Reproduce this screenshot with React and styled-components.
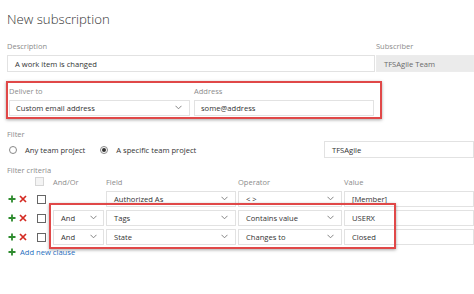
import React from 'react';
import styled, { createGlobalStyle } from 'styled-components';

const GlobalStyle = createGlobalStyle`
  html, body {
    margin: 0;
    padding: 0;
    background: #ffffff;
  }
  body {
    width: 474px;
    height: 294px;
    overflow: hidden;
    font-family: "Open Sans", "Noto Sans", Arial, sans-serif;
    color: #333333;
  }
`

const Page = styled.div`
  padding: 9px 0 0 7px;
  box-sizing: border-box;
  width: 474px;
`

const Title = styled.h1`
  margin: 0 0 12px 0;
  font-weight: 300;
  font-size: 13.2px;
  line-height: 20px;
  color: #333;
`

const Label = styled.div`
  font-size: 7.5px;
  line-height: 10px;
  color: #8c8c8c;
  margin-bottom: ${p => p.gap || 4}px;
`

const TopRow = styled.div`
  display: flex;
  align-items: flex-end;
`

const Field = styled.div`
  display: flex;
  flex-direction: column;
  width: ${p => p.width ? p.width + 'px' : 'auto'};
  flex: ${p => p.width ? 'none' : 1};
  margin-right: ${p => p.right || 0}px;
`

const Box = styled.div`
  height: ${p => p.h || 17}px;
  box-sizing: border-box;
  border: 1px solid ${p => p.muted ? '#ececec' : '#e2e2e2'};
  background: ${p => p.muted ? '#ebebeb' : '#fff'};
  color: ${p => p.muted ? '#6a6a6a' : '#333'};
  font-size: 7.6px;
  display: flex;
  align-items: center;
  padding-left: ${p => p.pad || 7}px;
  white-space: nowrap;
`

const Highlight = styled.div`
  margin: 9px 0 0 -1px;
  width: 376px;
  box-sizing: border-box;
  border: 2px solid #e04848;
  box-shadow: 0 1px 3px rgba(0, 0, 0, 0.35);
  padding: 3px 6px 1px 1px;
  display: flex;
`

const Select = styled(Box)`
  position: relative;
  padding-right: 14px;
`

const ChevronWrap = styled.span`
  position: absolute;
  right: ${p => p.right || 7}px;
  top: 50%;
  margin-top: -3px;
  line-height: 0;
`

const Chevron = ({ right }) => (
  <ChevronWrap right={right}>
    <svg width="7" height="5" viewBox="0 0 7 5">
      <path d="M0.5 0.8 L3.5 3.8 L6.5 0.8" fill="none" stroke="#777" strokeWidth="0.9" />
    </svg>
  </ChevronWrap>
)

const FilterSection = styled.div`
  margin-top: 10px;
`

const RadioRow = styled.div`
  display: flex;
  align-items: center;
  margin-top: -2px;
`

const RadioItem = styled.label`
  display: flex;
  align-items: center;
  font-size: 7.6px;
  color: #333;
  margin-right: 13px;
`

const RadioCircle = styled.span`
  width: 6px;
  height: 6px;
  border-radius: 50%;
  border: 1px solid #888;
  margin: 0 8px 0 2px;
  display: inline-flex;
  align-items: center;
  justify-content: center;
  &::after {
    content: '';
    width: 4px;
    height: 4px;
    border-radius: 50%;
    background: ${p => p.checked ? '#333' : 'transparent'};
  }
`

const ProjectBox = styled(Box)`
  margin-left: auto;
  width: 150px;
`

const Criteria = styled.div`
  margin-top: 7px;
  position: relative;
`

const Grid = styled.div`
  display: grid;
  grid-template-columns: 25px 21px 53px 132px 106px 1fr;
  row-gap: 3px;
  align-items: center;
`

const HeadCell = styled.div`
  font-size: 7.5px;
  color: #8c8c8c;
  line-height: 10px;
  height: 11px;
`

const Actions = styled.div`
  display: flex;
  align-items: center;
  gap: 3px;
  padding-left: 1px;
`

const CheckBox = styled.span`
  display: block;
  width: 7px;
  height: 7px;
  border: 1px solid #666;
  margin-left: 5px;
  background: #fff;
`

const FadedCheck = styled(CheckBox)`
  margin-left: 3px;
  border-color: #d6d6d6;
  background: #f4f4f4;
`

const Cell = styled.div`
  padding-right: ${p => p.gap === undefined ? 2 : p.gap}px;
`

const RowOverlay = styled.div`
  position: absolute;
  left: 42px;
  top: 38px;
  width: 347px;
  height: 46px;
  box-sizing: border-box;
  border: 2px solid #e04848;
  box-shadow: 0 1px 3px rgba(0, 0, 0, 0.35);
  pointer-events: none;
`

const AddClause = styled.div`
  display: flex;
  align-items: center;
  gap: 4px;
  margin-top: 2px;
  font-size: 7.6px;
  color: #1f6fc0;
  padding-left: 1px;
`

const Plus = ({ size = 8 }) => (
  <svg width={size} height={size} viewBox="0 0 8 8">
    <path d="M4 0.5 V7.5 M0.5 4 H7.5" stroke="#2e8b2e" strokeWidth="1.8" />
  </svg>
)

const Cross = () => (
  <svg width="8" height="8" viewBox="0 0 8 8">
    <path d="M1 1 L7 7 M7 1 L1 7" stroke="#d42a22" strokeWidth="1.7" />
  </svg>
)

const clauses = [
  { andOr: null, field: 'Authorized As', op: '< >', value: '[Member]' },
  { andOr: 'And', field: 'Tags', op: 'Contains value', value: 'USERX' },
  { andOr: 'And', field: 'State', op: 'Changes to', value: 'Closed' },
]

const App = () => {
  return (
    <Page>
      <GlobalStyle />
      <Title>New subscription</Title>

      <TopRow>
        <Field right={1}>
          <Label>Description</Label>
          <Box>A work item is changed</Box>
        </Field>
        <Field width={98}>
          <Label>Subscriber</Label>
          <Box muted>TFSAgile Team</Box>
        </Field>
      </TopRow>

      <Highlight>
        <Field width={181} right={4}>
          <Label gap={4}>Deliver to</Label>
          <Select h={16} pad={6}>Custom email address<Chevron /></Select>
        </Field>
        <Field>
          <Label gap={4}>Address</Label>
          <Box h={16} pad={6}>some@address</Box>
        </Field>
      </Highlight>

      <FilterSection>
        <Label gap={0}>Filter</Label>
        <RadioRow>
          <RadioItem><RadioCircle />Any team project</RadioItem>
          <RadioItem><RadioCircle checked />A specific team project</RadioItem>
          <ProjectBox>TFSAgile</ProjectBox>
        </RadioRow>
      </FilterSection>

      <Criteria>
        <Label gap={2}>Filter criteria</Label>
        <Grid>
          <HeadCell />
          <HeadCell><FadedCheck /></HeadCell>
          <HeadCell>And/Or</HeadCell>
          <HeadCell>Field</HeadCell>
          <HeadCell>Operator</HeadCell>
          <HeadCell>Value</HeadCell>

          {clauses.map((c, i) => (
            <React.Fragment key={i}>
              <Actions><Plus /><Cross /></Actions>
              <Cell><CheckBox /></Cell>
              <Cell>
                {c.andOr && <Select h={16}>{c.andOr}<Chevron right={6} /></Select>}
              </Cell>
              <Cell><Select h={16}>{c.field}<Chevron /></Select></Cell>
              <Cell><Select h={16}>{c.op}<Chevron /></Select></Cell>
              <Cell gap={0}><Box h={16}>{c.value}</Box></Cell>
            </React.Fragment>
          ))}
        </Grid>
        <RowOverlay />
        <AddClause><Plus />Add new clause</AddClause>
      </Criteria>
    </Page>
  );
}

export default App;
